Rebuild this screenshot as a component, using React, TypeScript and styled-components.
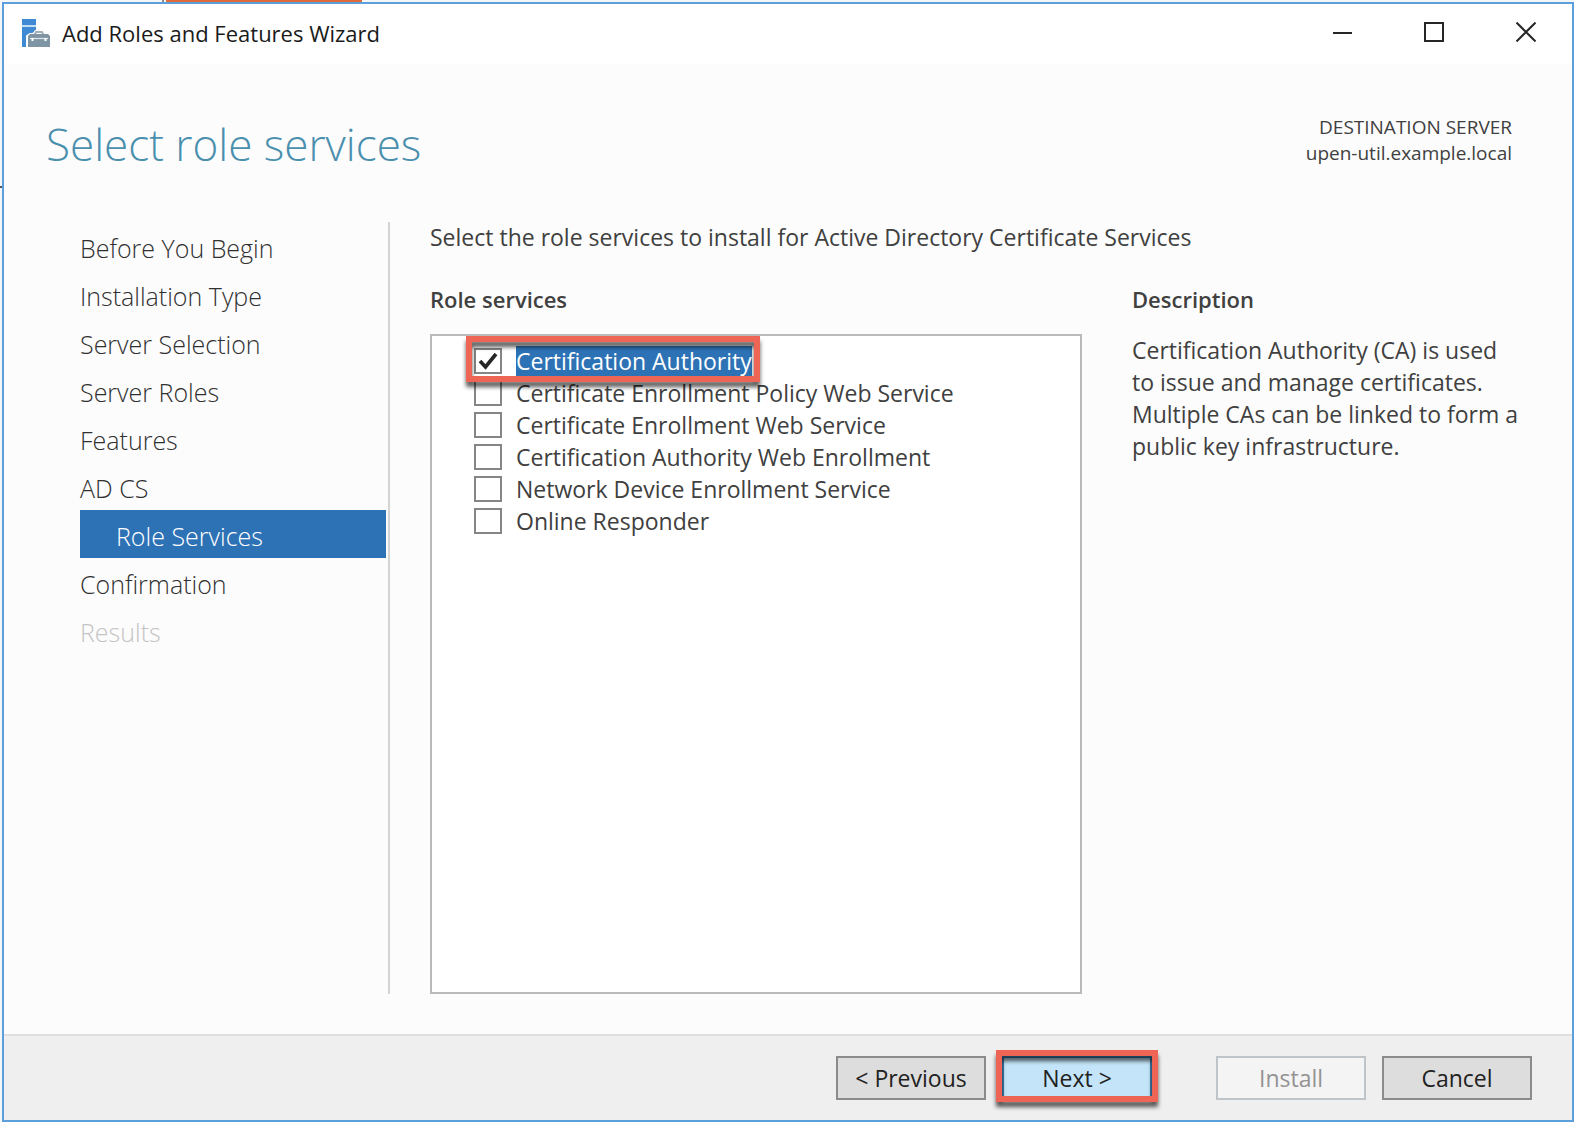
import React, { useState } from "react";
import styled, { createGlobalStyle, css } from "styled-components";

const accent = "#2d72b5";
const marker = "#ee6555";

const GlobalStyle = createGlobalStyle`
  * { box-sizing: border-box; }
  body { margin: 0; background: #ffffff; }
  body, button, input {
    font-family: "Open Sans", "Noto Sans", sans-serif;
    font-size: 23px;
  }
  h1, h2, p, ul { margin: 0; padding: 0; }
`;

const Desktop = styled.div`
  min-height: 100vh;
  display: flex;
  padding: 2px 0 0 2px;
  background:
    linear-gradient(#e06a3a, #e06a3a) 166px 0 / 196px 2px no-repeat,
    linear-gradient(#8a8a8a, #8a8a8a) 162px 0 / 2px 2px no-repeat,
    linear-gradient(#4d5566, #4d5566) 0 186px / 2px 2px no-repeat,
    #f4f6f8;
`;

const Window = styled.div`
  flex: 1;
  display: flex;
  flex-direction: column;
  border: 2px solid #5b9fdc;
  background: #fcfcfc;
  color: #404040;
`;

const TitleBar = styled.header`
  display: flex;
  align-items: center;
  height: 60px;
  padding: 0 26px 2px 18px;
  background: #ffffff;
`;

const WindowTitle = styled.span`
  flex: 1;
  padding-left: 12px;
  font-size: 22px;
  line-height: 32px;
  color: #1b1b1b;
`;

const WindowControls = styled.div`
  display: flex;
  gap: 52px;
  padding-bottom: 2px;
`;

const ControlButton = styled.button`
  display: flex;
  align-items: center;
  justify-content: center;
  width: 40px;
  height: 40px;
  padding: 0;
  border: 0;
  background: transparent;
`;

const Heading = styled.div`
  display: flex;
  justify-content: space-between;
  align-items: flex-start;
  height: 158px;
  padding: 48px 60px 0 42px;
`;

const PageTitle = styled.h1`
  font-size: 44px;
  line-height: 64px;
  font-weight: 300;
  color: #4a8fad;
`;

const Destination = styled.div`
  padding-top: 2px;
  font-size: 19px;
  line-height: 26px;
  text-align: right;
`;

const Content = styled.main`
  flex: 1;
  display: flex;
  padding: 0 40px 40px 76px;
`;

const StepNav = styled.nav`
  flex: none;
  width: 310px;
  padding-right: 2px;
  border-right: 2px solid #d4d4d4;
`;

const StepList = styled.ul`
  list-style: none;
`;

const Step = styled.a<{ $active?: boolean; $nested?: boolean; $disabled?: boolean }>`
  display: block;
  height: 48px;
  padding-top: 4px;
  padding-left: ${(p) => (p.$nested ? 36 : 0)}px;
  font-size: 25px;
  line-height: 44px;
  font-weight: 300;
  text-decoration: none;
  color: ${(p) => (p.$active ? "#ffffff" : p.$disabled ? "#c4c4c4" : "#303030")};
  background: ${(p) => (p.$active ? accent : "transparent")};
`;

const Panel = styled.section`
  flex: 1;
  display: flex;
  flex-direction: column;
  padding-left: 40px;
`;

const Instruction = styled.p`
  line-height: 30px;
`;

const Columns = styled.div`
  flex: 1;
  display: grid;
  grid-template-columns: minmax(0, 652fr) minmax(0, 400fr);
  column-gap: 50px;
  padding-top: 32px;
`;

const Column = styled.div`
  display: flex;
  flex-direction: column;
`;

const ColumnTitle = styled.h2`
  font-size: 22px;
  line-height: 30px;
  font-weight: 600;
`;

const ServiceList = styled.div`
  flex: 1;
  display: flex;
  flex-direction: column;
  align-items: flex-start;
  margin-top: 20px;
  padding: 9px 0 0 42px;
  border: 2px solid #bababa;
  background: #ffffff;
`;

const callout = css`
  content: "";
  position: absolute;
  border: 6px solid ${marker};
  filter: drop-shadow(0 5px 2px rgba(0, 0, 0, 0.65));
  pointer-events: none;
`;

const ServiceRow = styled.label<{ $highlighted?: boolean }>`
  position: relative;
  display: flex;
  align-items: center;
  gap: 14px;
  height: 32px;
  line-height: 30px;
  z-index: ${(p) => (p.$highlighted ? 1 : 0)};

  ${(p) =>
    p.$highlighted &&
    css`
      &::after {
        ${callout}
        inset: -9px -8px -5px -8px;
      }
    `}
`;

const CheckBox = styled.input`
  appearance: none;
  flex: none;
  width: 28px;
  height: 26px;
  margin: 0;
  border: 2px solid #858585;
  background: #ffffff;
`;

const CheckCell = styled.span`
  display: grid;

  & > * {
    grid-area: 1 / 1;
    place-self: center;
  }
`;

const ServiceName = styled.span<{ $selected?: boolean }>`
  color: ${(p) => (p.$selected ? "#ffffff" : "inherit")};
  background: ${(p) => (p.$selected ? accent : "transparent")};
`;

const Description = styled.p`
  padding: 20px 10px 0 0;
  line-height: 32px;
`;

const Footer = styled.footer`
  display: flex;
  justify-content: flex-end;
  align-items: flex-start;
  gap: 16px;
  height: 86px;
  padding: 20px 40px 0 0;
  border-top: 2px solid #dfdfdf;
  background: #efefef;
`;

const ButtonSlot = styled.div<{ $highlighted?: boolean; $spaced?: boolean }>`
  position: relative;
  height: 44px;
  margin-right: ${(p) => (p.$spaced ? 48 : 0)}px;

  ${(p) =>
    p.$highlighted &&
    css`
      &::after {
        ${callout}
        inset: -6px -6px -2px -6px;
      }
    `}
`;

const FooterButton = styled.button<{ $primary?: boolean }>`
  width: 150px;
  height: 44px;
  padding: 0;
  line-height: 40px;
  color: #222222;
  border: 2px solid ${(p) => (p.$primary ? "#3c7fb1" : "#8b8b8b")};
  background: ${(p) => (p.$primary ? "#c4e5f9" : "#dddddd")};

  &:disabled {
    color: #939393;
    border-color: #bfc4c8;
    background: #f4f4f4;
  }
`;

function AppIcon() {
  return (
    <svg width="28" height="28" viewBox="0 0 28 28" aria-hidden="true">
      <rect x="0" y="0" width="14" height="6" fill="#3f8bd3" />
      <path d="M0 6h14v2H0z" fill="#c4dff5" />
      <path d="M0 8h14v5L6 15v13H0z" fill="#3f8bd3" />
      <path d="M4 28V16.500L8 14h3l2-3h8l2 3h4l1 2v12z" fill="#ffffff" />
      <path d="M12.500 16l1.500-3h6l1.500 3" fill="none" stroke="#a3b0ba" strokeWidth="2" />
      <path d="M8 15h18l2 2v11H6V17z" fill="#8095a3" />
      <path d="M8 19.500h18" stroke="#dfe6ea" strokeWidth="1.200" />
      <path d="M10.500 19v3M23.500 19v3" stroke="#ffffff" strokeWidth="2" />
    </svg>
  );
}

function CheckMark() {
  return (
    <svg width="24" height="22" viewBox="0 0 24 22" aria-hidden="true" pointerEvents="none">
      <path d="M4 11l5.500 6L20 4" fill="none" stroke="#262626" strokeWidth="3.600" />
    </svg>
  );
}

const controls = [
  { name: "Minimize", path: "M1 11h19" },
  { name: "Maximize", path: "M1 1h18v18H1z" },
  { name: "Close", path: "M0.500 0.500l19 19M19.500 0.500l-19 19" },
];

const steps = [
  { name: "Before You Begin" },
  { name: "Installation Type" },
  { name: "Server Selection" },
  { name: "Server Roles" },
  { name: "Features" },
  { name: "AD CS" },
  { name: "Role Services", active: true, nested: true },
  { name: "Confirmation" },
  { name: "Results", disabled: true },
];

const services = [
  "Certification Authority",
  "Certificate Enrollment Policy Web Service",
  "Certificate Enrollment Web Service",
  "Certification Authority Web Enrollment",
  "Network Device Enrollment Service",
  "Online Responder",
];

export default function App() {
  const [checked, setChecked] = useState<string[]>([services[0]]);
  const toggle = (name: string) =>
    setChecked((list) =>
      list.includes(name) ? list.filter((n) => n !== name) : [...list, name]
    );

  return (
    <Desktop>
      <GlobalStyle />
      <Window>
        <TitleBar>
          <AppIcon />
          <WindowTitle>Add Roles and Features Wizard</WindowTitle>
          <WindowControls>
            {controls.map((c) => (
              <ControlButton key={c.name} type="button" aria-label={c.name}>
                <svg width="20" height="20" viewBox="0 0 20 20" aria-hidden="true">
                  <path d={c.path} fill="none" stroke="#262626" strokeWidth="2" />
                </svg>
              </ControlButton>
            ))}
          </WindowControls>
        </TitleBar>

        <Heading>
          <PageTitle>Select role services</PageTitle>
          <Destination>
            <div>DESTINATION SERVER</div>
            <div>upen-util.example.local</div>
          </Destination>
        </Heading>

        <Content>
          <StepNav aria-label="Wizard steps">
            <StepList>
              {steps.map((s) => (
                <li key={s.name}>
                  <Step
                    href="#"
                    $active={s.active}
                    $nested={s.nested}
                    $disabled={s.disabled}
                    aria-current={s.active ? "step" : undefined}
                    aria-disabled={s.disabled}
                  >
                    {s.name}
                  </Step>
                </li>
              ))}
            </StepList>
          </StepNav>

          <Panel>
            <Instruction>
              Select the role services to install for Active Directory Certificate Services
            </Instruction>
            <Columns>
              <Column>
                <ColumnTitle>Role services</ColumnTitle>
                <ServiceList>
                  {services.map((name, i) => (
                    <ServiceRow key={name} $highlighted={i === 0}>
                      <CheckCell>
                        <CheckBox
                          type="checkbox"
                          checked={checked.includes(name)}
                          onChange={() => toggle(name)}
                        />
                        {checked.includes(name) && <CheckMark />}
                      </CheckCell>
                      <ServiceName $selected={i === 0}>{name}</ServiceName>
                    </ServiceRow>
                  ))}
                </ServiceList>
              </Column>
              <Column>
                <ColumnTitle>Description</ColumnTitle>
                <Description>
                  Certification Authority (CA) is used to issue and manage certificates.
                  Multiple CAs can be linked to form a public key infrastructure.
                </Description>
              </Column>
            </Columns>
          </Panel>
        </Content>

        <Footer>
          <ButtonSlot>
            <FooterButton type="button">&lt; Previous</FooterButton>
          </ButtonSlot>
          <ButtonSlot $highlighted $spaced>
            <FooterButton type="button" $primary>
              Next &gt;
            </FooterButton>
          </ButtonSlot>
          <ButtonSlot>
            <FooterButton type="button" disabled>
              Install
            </FooterButton>
          </ButtonSlot>
          <ButtonSlot>
            <FooterButton type="button">Cancel</FooterButton>
          </ButtonSlot>
        </Footer>
      </Window>
    </Desktop>
  );
}
